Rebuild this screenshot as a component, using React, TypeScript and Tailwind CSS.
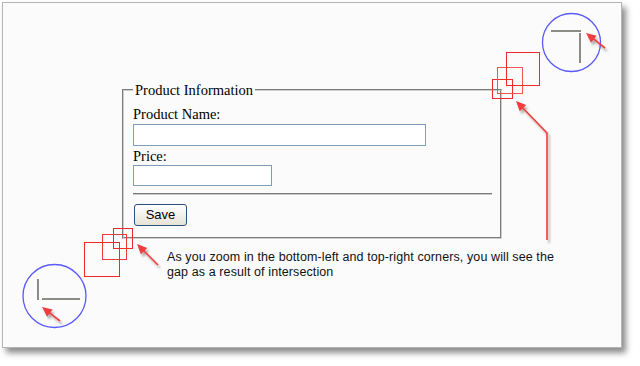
import React from "react";

type Pt = [number, number];

function Arrow({ tail, tip, via }: { tail: Pt; tip: Pt; via?: Pt[] }) {
  const pts: Pt[] = [tail, ...(via || []), tip];
  const prev = pts[pts.length - 2];
  const dx = tip[0] - prev[0];
  const dy = tip[1] - prev[1];
  const len = Math.hypot(dx, dy);
  const ux = dx / len;
  const uy = dy / len;
  const nx = -uy;
  const ny = ux;
  const hl = 10;
  const hw = 4.5;
  const base: Pt = [tip[0] - ux * hl, tip[1] - uy * hl];
  const lineEnd: Pt = [tip[0] - ux * 6, tip[1] - uy * 6];
  const linePts = [...pts.slice(0, -1), lineEnd].map((p) => p.join(",")).join(" ");
  const head = [
    tip,
    [base[0] + nx * hw, base[1] + ny * hw],
    [base[0] - nx * hw, base[1] - ny * hw],
  ]
    .map((p) => p.join(","))
    .join(" ");
  return (
    <g filter="url(#ashadow)">
      <polyline points={linePts} fill="none" stroke="#f03c3c" strokeWidth={1.6} />
      <polygon points={head} fill="#f03c3c" />
    </g>
  );
}

export default function App() {
  return (
    <div className="relative w-[640px] h-[366px] bg-white overflow-hidden pt-[2px] pl-[2px]">
      <div className="w-[620px] h-[346px] border border-[#b4b4b4] bg-[#fbfbfb] shadow-[4px_5px_6px_rgba(0,0,0,0.45)] flex flex-col">
        <fieldset className="self-start ml-[119px] mt-[78px] w-[380px] border-2 [border-style:groove] border-[#cfcfcf] pl-[9px] pr-[8px] pt-[6px] pb-[11px] font-['Liberation_Serif',serif] text-[14.5px] leading-[18px] text-black">
          <legend className="px-[2px] leading-[18px]">Product Information</legend>
          <label className="block">Product Name:</label>
          <div className="mt-[1px] w-[293px] h-[22px] border border-[#7f9db9] bg-white" />
          <label className="block mt-[1px]">Price:</label>
          <div className="w-[139px] h-[21px] border border-[#7f9db9] bg-white" />
          <div className="mt-[7px] w-[359px] h-[2px] border-t border-[#7a7a7a] bg-[#c8c8c8]" />
          <button className="mt-[9px] ml-[1px] w-[53px] h-[22px] rounded-[3px] border border-[#2f4f7f] bg-gradient-to-b from-white to-[#e6e3d6] font-['Liberation_Sans',sans-serif] text-[13px] leading-[20px] text-black">
            Save
          </button>
        </fieldset>
        <p className="ml-[164px] mt-[11px] whitespace-nowrap font-['Liberation_Sans',sans-serif] text-[12.5px] tracking-[0.1px] leading-[15px] text-[#111]">
          As you zoom in the bottom-left and top-right corners, you will see the
          <br />
          gap as a result of intersection
        </p>
      </div>

      <svg className="absolute inset-0 pointer-events-none" width={640} height={366} viewBox="0 0 640 366">
        <defs>
          <filter id="ashadow" x="-50%" y="-50%" width="200%" height="200%">
            <feDropShadow dx="2" dy="3" stdDeviation="1.2" floodColor="#000" floodOpacity="0.3" />
          </filter>
        </defs>

        {/* top-right squares */}
        <rect x={492.5} y={79.5} width={20} height={19} fill="none" stroke="#ee2a2a" strokeWidth={1} />
        <rect x={497.5} y={67.5} width={25} height={26} fill="none" stroke="#f25555" strokeWidth={1} />
        <rect x={506.5} y={52.5} width={33} height={33} fill="none" stroke="#ee2a2a" strokeWidth={1} />

        {/* bottom-left squares */}
        <rect x={113.5} y={228.5} width={19} height={20} fill="none" stroke="#ee2a2a" strokeWidth={1} />
        <rect x={102.5} y={234.5} width={24} height={25} fill="none" stroke="#f03a3a" strokeWidth={1} />
        <rect x={84.5} y={242.5} width={35} height={34} fill="none" stroke="#ee2a2a" strokeWidth={1} />

        {/* circles */}
        <circle cx={571.5} cy={42.5} r={29} fill="none" stroke="#5a5aff" strokeWidth={1.3} />
        <circle cx={54.5} cy={296} r={31.5} fill="none" stroke="#5a5aff" strokeWidth={1.3} />

        {/* zoomed corner glyphs */}
        <line x1={551} y1={31} x2={581} y2={31} stroke="#8c8c86" strokeWidth={2} />
        <line x1={580} y1={33} x2={580} y2={63} stroke="#8c8c86" strokeWidth={2} />
        <line x1={38} y1={279} x2={38} y2={300} stroke="#8c8c86" strokeWidth={2} />
        <line x1={42} y1={299} x2={80} y2={299} stroke="#8c8c86" strokeWidth={2} />

        {/* arrows */}
        <Arrow tail={[605, 48]} tip={[586, 33]} />
        <Arrow tail={[547, 240]} via={[[547, 133]]} tip={[516, 101]} />
        <Arrow tail={[158, 265]} tip={[137, 244]} />
        <Arrow tail={[60, 321]} tip={[42, 307]} />
      </svg>
    </div>
  );
}
